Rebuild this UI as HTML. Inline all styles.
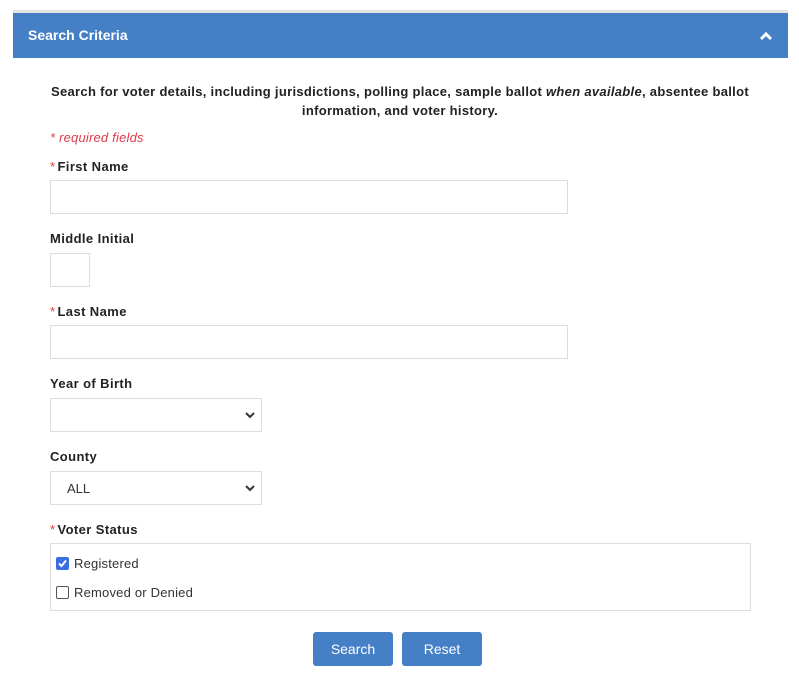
<!DOCTYPE html>
<html><head><meta charset="utf-8"><style>
body{margin:0;width:799px;height:675px;background:#fff;font-family:"Liberation Sans",sans-serif;color:#222;position:relative;overflow:hidden}
.a{position:absolute}
.lbl{position:absolute;left:50px;font-size:13px;font-weight:bold;color:#222;letter-spacing:0.4px}
.req{color:#e03a3a;font-weight:normal;margin-right:2px}
.box{position:absolute;border:1px solid #ddd;box-sizing:border-box;background:#fff}
.chev{position:absolute;right:6px;top:12px}
.btn{position:absolute;top:632px;width:80px;height:34px;background:#4580c7;border-radius:3px;color:#fff;font-size:14px;text-align:center;line-height:34px}
.cb{position:absolute;left:56px;width:13px;height:13px;box-sizing:border-box;border-radius:2px}
.ct{position:absolute;left:74px;font-size:13px;color:#333;letter-spacing:0.2px}
</style></head><body>
<div class="a" style="left:13px;top:10px;width:775px;height:3px;background:#e3e3e3"></div>
<div class="a" style="left:13px;top:13px;width:775px;height:45px;background:#4580c7"></div>
<div class="a" style="left:28px;top:27px;font-size:14px;font-weight:bold;color:#fff">Search Criteria</div>
<svg class="a" style="left:759px;top:31px" width="14" height="10" viewBox="0 0 14 10"><path d="M2 8 L7 3 L12 8" stroke="#fff" stroke-width="3" fill="none"/></svg>
<div class="a" style="left:20px;top:82px;width:760px;text-align:center;font-size:13px;font-weight:bold;line-height:19px;color:#222;letter-spacing:0.3px">Search for voter details, including jurisdictions, polling place, sample ballot <i>when available</i>, absentee ballot<br>information, and voter history.</div>
<div class="a" style="left:50px;top:130px;font-size:13px;font-style:italic;color:#e03a4a;letter-spacing:0.2px">* required fields</div>
<div class="lbl" style="top:159px"><span class="req">*</span>First Name</div>
<div class="box" style="left:50px;top:180px;width:518px;height:34px"></div>
<div class="lbl" style="top:231px">Middle Initial</div>
<div class="box" style="left:50px;top:253px;width:40px;height:34px"></div>
<div class="lbl" style="top:304px"><span class="req">*</span>Last Name</div>
<div class="box" style="left:50px;top:325px;width:518px;height:34px"></div>
<div class="lbl" style="top:376px">Year of Birth</div>
<div class="box" style="left:50px;top:398px;width:212px;height:34px"><svg class="chev" width="10" height="8" viewBox="0 0 10 8"><path d="M1 2 L5 6 L9 2" stroke="#333" stroke-width="2" fill="none"/></svg></div>
<div class="lbl" style="top:449px">County</div>
<div class="box" style="left:50px;top:471px;width:212px;height:34px"><span style="position:absolute;left:16px;top:9px;font-size:13px;color:#333">ALL</span><svg class="chev" width="10" height="8" viewBox="0 0 10 8"><path d="M1 2 L5 6 L9 2" stroke="#333" stroke-width="2" fill="none"/></svg></div>
<div class="lbl" style="top:522px"><span class="req">*</span>Voter Status</div>
<div class="box" style="left:50px;top:543px;width:701px;height:68px"></div>
<div class="cb" style="top:557px;background:#3b6fe0"><svg width="13" height="13" viewBox="0 0 13 13" style="position:absolute;left:0;top:0"><path d="M3 6.5 L5.5 9 L10 3.5" stroke="#fff" stroke-width="2" fill="none"/></svg></div>
<div class="ct" style="top:556px">Registered</div>
<div class="cb" style="top:586px;border:1px solid #555"></div>
<div class="ct" style="top:585px">Removed or Denied</div>
<div class="btn" style="left:313px">Search</div>
<div class="btn" style="left:402px">Reset</div>
</body></html>
